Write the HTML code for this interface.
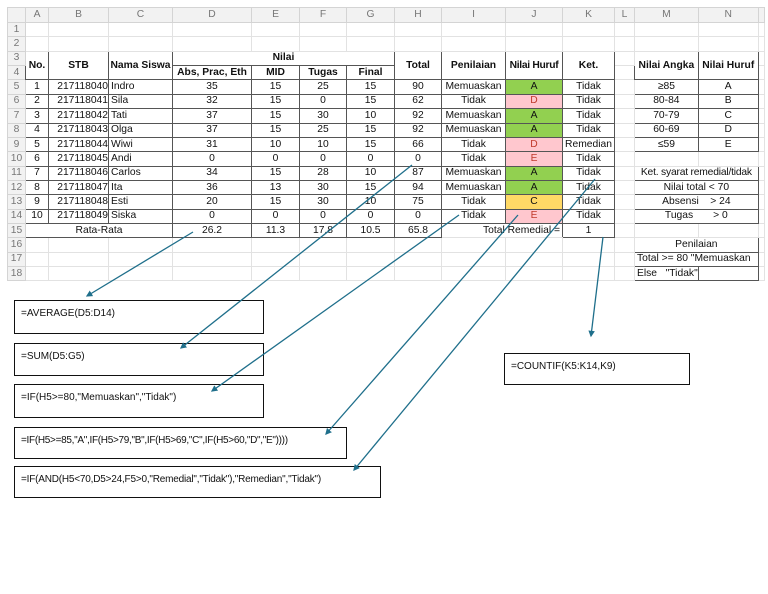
<!DOCTYPE html>
<html><head><meta charset="utf-8">
<style>
html,body{margin:0;padding:0;background:#fff;width:768px;height:594px;overflow:hidden;position:relative;font-family:"Liberation Sans",sans-serif;}
table.g{position:absolute;left:7px;top:7px;border-collapse:collapse;table-layout:fixed;font-size:10.3px;color:#111;}
table.g td{border:1px solid #e2e2e2;padding:0;height:13.36px;line-height:12px;text-align:center;white-space:nowrap;overflow:hidden;}
table.g tr.h td{height:14px;background:#f2f2f2;color:#777;border-color:#d4d4d4;}
table.g td.rn{background:#f2f2f2;color:#777;border-color:#d4d4d4;}
table.g td.b{border:1px solid #555;}
table.g td.bh{border:1px solid #555;font-weight:bold;}
.l{text-align:left!important;padding-left:2px!important;}
.r{text-align:right!important;}
.gr{background:#92d050;}
.pk{background:#ffc7ce;color:#c0392b;}
.yl{background:#ffd966;}
.box{position:absolute;border:1px solid #111;font-size:10px;color:#111;box-sizing:border-box;padding:7px 0 0 6px;white-space:nowrap;}
svg{position:absolute;left:0;top:0;}
</style></head><body>
<table class="g">
<colgroup>
<col style="width:18px"><col style="width:23px"><col style="width:60px"><col style="width:64px"><col style="width:79px"><col style="width:48px"><col style="width:47px"><col style="width:48px"><col style="width:47px"><col style="width:64px"><col style="width:57px"><col style="width:52px"><col style="width:20px"><col style="width:63px"><col style="width:60px"><col style="width:6px">
</colgroup>
<tr class="h"><td></td><td>A</td><td>B</td><td>C</td><td>D</td><td>E</td><td>F</td><td>G</td><td>H</td><td>I</td><td>J</td><td>K</td><td>L</td><td>M</td><td>N</td><td></td></tr>
<tr><td class="rn">1</td><td></td><td></td><td></td><td></td><td></td><td></td><td></td><td></td><td></td><td></td><td></td><td></td><td></td><td></td><td></td></tr>
<tr><td class="rn">2</td><td></td><td></td><td></td><td></td><td></td><td></td><td></td><td></td><td></td><td></td><td></td><td></td><td></td><td></td><td></td></tr>
<tr><td class="rn">3</td><td class="bh" rowspan="2">No.</td><td class="bh" rowspan="2">STB</td><td class="bh" rowspan="2">Nama Siswa</td><td class="bh" colspan="4">Nilai</td><td class="bh" rowspan="2">Total</td><td class="bh" rowspan="2">Penilaian</td><td class="bh" rowspan="2" style="letter-spacing:-0.3px">Nilai Huruf</td><td class="bh" rowspan="2">Ket.</td><td></td><td class="bh" rowspan="2">Nilai Angka</td><td class="bh" rowspan="2">Nilai Huruf</td><td></td></tr>
<tr><td class="rn">4</td><td class="bh">Abs, Prac, Eth</td><td class="bh">MID</td><td class="bh">Tugas</td><td class="bh">Final</td><td></td><td></td></tr>
<tr><td class="rn">5</td><td class="b">1</td><td class="b r">217118040</td><td class="b l">Indro</td><td class="b">35</td><td class="b">15</td><td class="b">25</td><td class="b">15</td><td class="b">90</td><td class="b">Memuaskan</td><td class="b gr">A</td><td class="b">Tidak</td><td></td><td class="b">≥85</td><td class="b">A</td><td></td></tr>
<tr><td class="rn">6</td><td class="b">2</td><td class="b r">217118041</td><td class="b l">Sila</td><td class="b">32</td><td class="b">15</td><td class="b">0</td><td class="b">15</td><td class="b">62</td><td class="b">Tidak</td><td class="b pk">D</td><td class="b">Tidak</td><td></td><td class="b">80-84</td><td class="b">B</td><td></td></tr>
<tr><td class="rn">7</td><td class="b">3</td><td class="b r">217118042</td><td class="b l">Tati</td><td class="b">37</td><td class="b">15</td><td class="b">30</td><td class="b">10</td><td class="b">92</td><td class="b">Memuaskan</td><td class="b gr">A</td><td class="b">Tidak</td><td></td><td class="b">70-79</td><td class="b">C</td><td></td></tr>
<tr><td class="rn">8</td><td class="b">4</td><td class="b r">217118043</td><td class="b l">Olga</td><td class="b">37</td><td class="b">15</td><td class="b">25</td><td class="b">15</td><td class="b">92</td><td class="b">Memuaskan</td><td class="b gr">A</td><td class="b">Tidak</td><td></td><td class="b">60-69</td><td class="b">D</td><td></td></tr>
<tr><td class="rn">9</td><td class="b">5</td><td class="b r">217118044</td><td class="b l">Wiwi</td><td class="b">31</td><td class="b">10</td><td class="b">10</td><td class="b">15</td><td class="b">66</td><td class="b">Tidak</td><td class="b pk">D</td><td class="b">Remedian</td><td></td><td class="b">≤59</td><td class="b">E</td><td></td></tr>
<tr><td class="rn">10</td><td class="b">6</td><td class="b r">217118045</td><td class="b l">Andi</td><td class="b">0</td><td class="b">0</td><td class="b">0</td><td class="b">0</td><td class="b">0</td><td class="b">Tidak</td><td class="b pk">E</td><td class="b">Tidak</td><td></td><td></td><td></td><td></td></tr>
<tr><td class="rn">11</td><td class="b">7</td><td class="b r">217118046</td><td class="b l">Carlos</td><td class="b">34</td><td class="b">15</td><td class="b">28</td><td class="b">10</td><td class="b">87</td><td class="b">Memuaskan</td><td class="b gr">A</td><td class="b">Tidak</td><td></td><td class="b" colspan="2" style="letter-spacing:-0.2px">Ket. syarat remedial/tidak</td><td></td></tr>
<tr><td class="rn">12</td><td class="b">8</td><td class="b r">217118047</td><td class="b l">Ita</td><td class="b">36</td><td class="b">13</td><td class="b">30</td><td class="b">15</td><td class="b">94</td><td class="b">Memuaskan</td><td class="b gr">A</td><td class="b">Tidak</td><td></td><td class="b" colspan="2">Nilai total &lt; 70</td><td></td></tr>
<tr><td class="rn">13</td><td class="b">9</td><td class="b r">217118048</td><td class="b l">Esti</td><td class="b">20</td><td class="b">15</td><td class="b">30</td><td class="b">10</td><td class="b">75</td><td class="b">Tidak</td><td class="b yl">C</td><td class="b">Tidak</td><td></td><td class="b" colspan="2">Absensi &nbsp;&nbsp; &gt; 24</td><td></td></tr>
<tr><td class="rn">14</td><td class="b">10</td><td class="b r">217118049</td><td class="b l">Siska</td><td class="b">0</td><td class="b">0</td><td class="b">0</td><td class="b">0</td><td class="b">0</td><td class="b">Tidak</td><td class="b pk">E</td><td class="b">Tidak</td><td></td><td class="b" colspan="2">Tugas &nbsp;&nbsp;&nbsp;&nbsp;&nbsp; &gt; 0</td><td></td></tr>
<tr><td class="rn">15</td><td class="b" colspan="3">Rata-Rata</td><td class="b">26.2</td><td class="b">11.3</td><td class="b">17.8</td><td class="b">10.5</td><td class="b">65.8</td><td class="r" colspan="2" style="border-right:1px solid #555;padding-right:2px">Total Remedial =</td><td class="b">1</td><td></td><td></td><td></td><td></td></tr>
<tr><td class="rn">16</td><td></td><td></td><td></td><td></td><td></td><td></td><td></td><td></td><td></td><td></td><td></td><td></td><td class="b" colspan="2">Penilaian</td><td></td></tr>
<tr><td class="rn">17</td><td></td><td></td><td></td><td></td><td></td><td></td><td></td><td></td><td></td><td></td><td></td><td></td><td class="b l" colspan="2">Total &gt;= 80 "Memuaskan</td><td></td></tr>
<tr><td class="rn">18</td><td></td><td></td><td></td><td></td><td></td><td></td><td></td><td></td><td></td><td></td><td></td><td></td><td class="b l">Else &nbsp; "Tidak"</td><td class="b"></td><td></td></tr>
</table>
<div style="position:absolute;left:0;top:283px;width:768px;height:311px;background:#fff"></div>

<div class="box" style="left:14px;top:300px;width:250px;height:34px">=AVERAGE(D5:D14)</div>
<div class="box" style="left:14px;top:343px;width:250px;height:33px">=SUM(D5:G5)</div>
<div class="box" style="left:14px;top:384px;width:250px;height:34px">=IF(H5&gt;=80,"Memuaskan","Tidak")</div>
<div class="box" style="left:14px;top:427px;width:333px;height:32px;letter-spacing:-0.3px">=IF(H5&gt;=85,"A",IF(H5&gt;79,"B",IF(H5&gt;69,"C",IF(H5&gt;60,"D","E"))))</div>
<div class="box" style="left:14px;top:466px;width:367px;height:32px;letter-spacing:-0.2px">=IF(AND(H5&lt;70,D5&gt;24,F5&gt;0,"Remedial","Tidak"),"Remedian","Tidak")</div>
<div class="box" style="left:504px;top:353px;width:186px;height:32px">=COUNTIF(K5:K14,K9)</div>

<svg width="768" height="594">
<defs><marker id="a" viewBox="0 0 10 10" refX="8" refY="5" markerWidth="5" markerHeight="5" orient="auto"><path d="M0,0 L10,5 L0,10 z" fill="#1f6f8b"/></marker></defs>
<g stroke="#1f6f8b" stroke-width="1.3" fill="none" marker-end="url(#a)">
<line x1="193" y1="232" x2="87" y2="296"/>
<line x1="412" y1="165" x2="181" y2="348"/>
<line x1="459" y1="215" x2="212" y2="391"/>
<line x1="518" y1="215" x2="326" y2="434"/>
<line x1="595" y1="179" x2="354" y2="470"/>
<line x1="603" y1="237" x2="591" y2="336"/>
</g>
</svg>
</body></html>
